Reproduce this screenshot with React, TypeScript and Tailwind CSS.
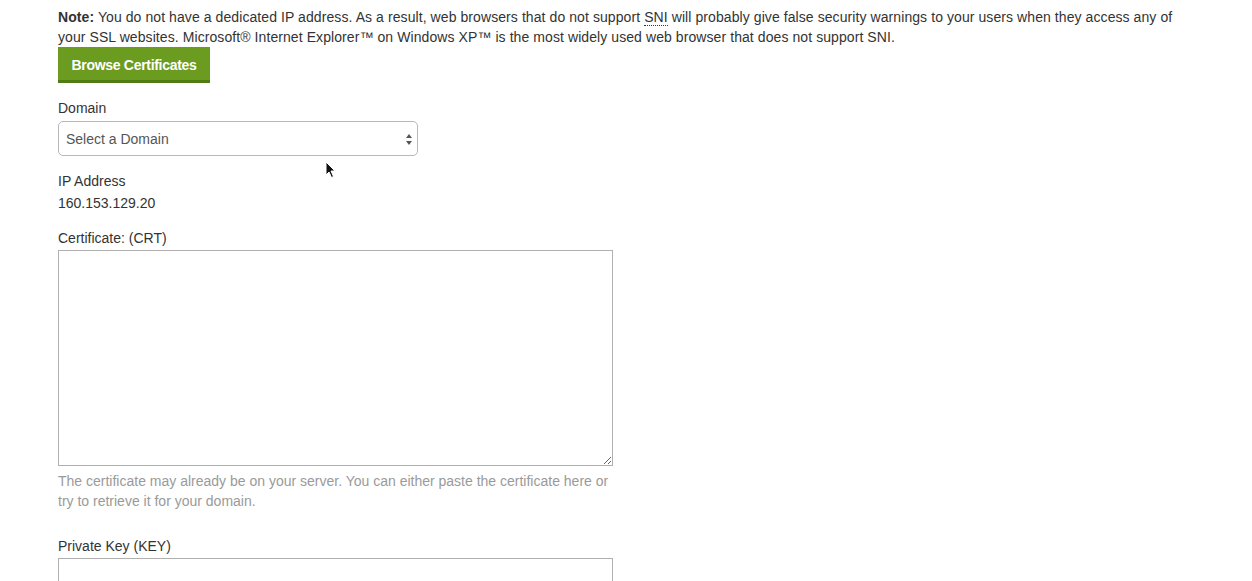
import React from "react";

export default function App() {
  return (
    <div className="relative min-h-[581px] w-[1252px] overflow-hidden bg-white text-[14px] leading-[20px] text-[#333]" style={{ fontFamily: '"Liberation Sans", Arial, sans-serif' }}>
      <div className="pl-[58px] pr-[60px] pt-[7px]">
        <p className="tracking-[0.08px]">
          <b>Note:</b> You do not have a dedicated IP address. As a result, web browsers that do not support{" "}
          <abbr className="border-b border-dotted border-[#333] no-underline" title="Server Name Indication">SNI</abbr>{" "}
          will probably give false security warnings to your users when they access any of your SSL websites. Microsoft® Internet Explorer™ on Windows XP™ is the most widely used web browser that does not support SNI.
        </p>
        <button className="h-[36px] w-[152px] border-b-[3px] border-[#4f7c15] bg-[#6b9c1f] pt-[2px] text-[14px] font-bold tracking-[-0.3px] text-white">
          Browse Certificates
        </button>

        <div className="mt-[15px]">
          <div>Domain</div>
          <div className="relative mt-[3px] flex h-[35px] w-[360px] items-center rounded-[5px] border border-[#b8b8b8] bg-white pl-[7px] text-[#555]">
            Select a Domain
            <svg className="absolute right-[4px] top-[11px]" width="8" height="13" viewBox="0 0 8 13">
              <path d="M4 1 L7 5 L1 5 Z" fill="#555" />
              <path d="M4 12 L7 8 L1 8 Z" fill="#555" />
            </svg>
          </div>
        </div>

        <div className="mt-[15px]">
          <div>IP Address</div>
          <div className="mt-[2px]">160.153.129.20</div>
        </div>

        <div className="mt-[15px]">
          <div>Certificate: (CRT)</div>
          <textarea className="mt-[2px] block h-[216px] w-[555px] border border-[#b0b0b0] outline-none" />
          <p className="mt-[5px] w-[560px] text-[#9a9a9a]">
            The certificate may already be on your server. You can either paste the certificate here or try to retrieve it for your domain.
          </p>
        </div>

        <div className="mt-[25px]">
          <div>Private Key (KEY)</div>
          <textarea className="mt-[2px] block h-[100px] w-[555px] border border-[#b0b0b0] outline-none" />
        </div>
      </div>

      <svg className="pointer-events-none absolute left-[325px] top-[161px]" width="12" height="18" viewBox="0 0 12 18">
        <path d="M1 1 L1 14 L4 11 L6.5 16.5 L8.5 15.5 L6 10 L10 10 Z" fill="#111" stroke="#fff" strokeWidth="1" />
      </svg>

      <div className="pointer-events-none absolute bottom-0 left-0 h-[18px] w-full bg-gradient-to-b from-transparent to-[#f0f0f0]" />
    </div>
  );
}
